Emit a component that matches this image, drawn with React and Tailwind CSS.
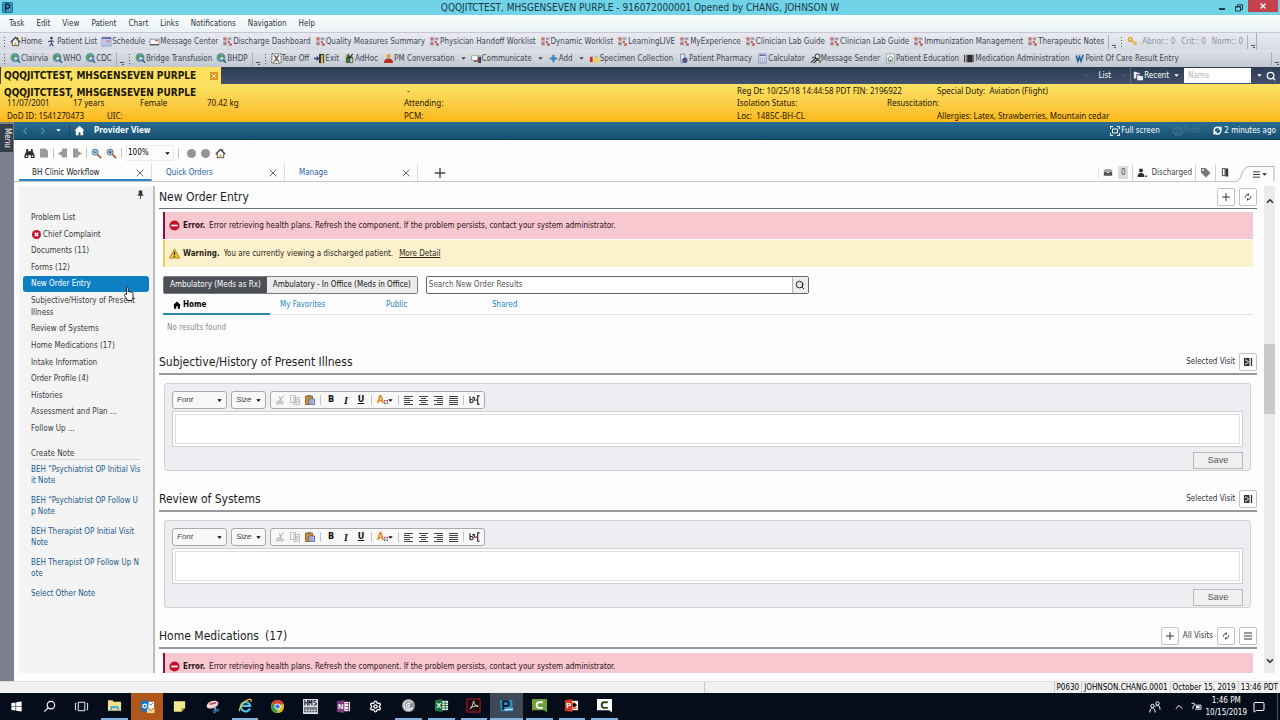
import React from "react";
import { Search, RefreshCw, Plus, X, ChevronUp, ChevronDown, ChevronLeft, ChevronRight, Settings, MessageSquare } from "lucide-react";

/* ---------- toolbar icons (12-unit grid) ---------- */
const Svg = ({ children, className = "h-[11px] w-[11px]", box = "0 0 12 12" }) => (
  <svg viewBox={box} className={`${className} shrink-0`} fill="none" aria-hidden="true">{children}</svg>
);
const HouseIcon = ({ className }) => (
  <Svg className={className}>
    <path d="M2.5 6v4.5h7V6" fill="#fdfdf0" stroke="#3b3b35" />
    <path d="M.8 6.8 6 1.6l5.2 5.2" stroke="#3b3b35" strokeWidth="1.3" />
    <path d="M8.3 1.2v2.4" stroke="#8a5a20" strokeWidth="1.4" />
    <path d="M5 7h2v3.5H5z" fill="#c9a24a" />
  </Svg>
);
const PersonIcon = () => (
  <Svg>
    <circle cx="6" cy="2.3" r="1.4" fill="#222d7a" />
    <path d="M6 4v4M3 6.2 6 4.8l2.6 1.4M6 8 4 11M6 8l2 3" stroke="#4050a0" strokeWidth="1.2" />
    <path d="M2.5 6h2" stroke="#222" />
  </Svg>
);
const ScheduleIcon = () => (
  <Svg>
    <path d="M1 1.5h10v9.5H1z" fill="#e9eefb" stroke="#7386b5" strokeWidth=".8" />
    <path d="M1 1.5h10v2H1z" fill="#53659c" />
    <path d="M2 5.5h8M2 7.5h8M2 9.5h8" stroke="#8b9acb" />
    <path d="M6 5.5h4" stroke="#d05050" />
  </Svg>
);
const MailIcon = () => (
  <Svg>
    <path d="M1 3.5h10v6H1z" fill="#fbfbfb" stroke="#777" strokeWidth=".8" />
    <path d="M1 9.6h10" stroke="#333" />
    <path d="M7 5h2.5" stroke="#c33" strokeWidth="1.3" />
  </Svg>
);
const TilesIcon = () => (
  <Svg>
    <path d="M1 1h10v10H1z" fill="#d3d4dc" />
    <path d="M1.5 1.5h3.500v3.500H1.500z" fill="#c9756c" />
    <path d="M6.500 2h3.500v2H6.500z" fill="#8d93b5" />
    <path d="M1.500 6.500h3.500v3.500H1.500z" fill="#a9808c" />
    <path d="M6.500 5.500h2v2h-2zM8 8h2.500v2.500H8z" fill="#c0504a" />
    <path d="M9 5.500h2v2H9z" fill="#f3f3f6" />
  </Svg>
);
const GlobeIcon = () => (
  <Svg>
    <circle cx="5.500" cy="5" r="4.400" fill="#5fa8cf" stroke="#3c6f91" strokeWidth=".6" />
    <path d="M2.500 2.500c2-1.500 3.500 0 3 1.500S3.500 5 3 7.500 1 4.500 2.500 2.500ZM6.500 2c2 0 3 1.500 3 3L7.500 4Z" fill="#58a344" />
    <circle cx="6.300" cy="5.800" r="2.300" fill="#dff1fb" fillOpacity=".75" stroke="#456" strokeWidth=".7" />
    <path d="m8 7.500 3 3.200" stroke="#3a5a86" strokeWidth="1.600" />
  </Svg>
);
const TearIcon = () => (
  <Svg>
    <path d="M1 1h10v10H1z" fill="#fff" stroke="#333" strokeDasharray="2 1" />
    <path d="M3 2.500 6 5l3-2.500M3 9.500 6 7l3 2.500" stroke="#333" strokeWidth="1.100" />
    <circle cx="6" cy="6" r="1.300" fill="#c33" />
  </Svg>
);
const ExitIcon = () => (
  <Svg>
    <path d="M5.500 1h5.500v10H5.500z" fill="#2a2a2a" />
    <path d="m7.500 2.500 2.500-1v10l-2.500-1z" fill="#d8b35c" />
    <path d="M0 6h4.500M3 4l2 2-2 2" stroke="#27408b" strokeWidth="1.400" />
  </Svg>
);
const AdHocIcon = () => (
  <Svg>
    <path d="M2 4h8v7H2z" fill="#3f6e46" />
    <path d="m3 1.500 2 4M5 1l1 4M9.500 1 6.500 5" stroke="#222" strokeWidth="1.100" />
    <path d="M1 2.500h2.500v2H1z" fill="#e5c52c" />
    <path d="M7 6h2v4H7z" fill="#cfd8e8" />
  </Svg>
);
const UserRedIcon = () => (
  <Svg>
    <circle cx="6" cy="3.400" r="2.400" fill="#e0a33a" />
    <path d="M1 11c0-3.500 2-5 5-5s5 1.500 5 5Z" fill="#b82c1f" />
  </Svg>
);
const CommIcon = () => (
  <Svg>
    <path d="M.5 3h7v5h-7z" fill="#fff" stroke="#777" strokeWidth=".7" />
    <path d="M3 9h4" stroke="#333" />
    <path d="M8 3.500h3V11H8z" fill="#2b3f7d" />
    <path d="M7 6h2v4H7z" fill="#cc3a2a" />
    <circle cx="9.500" cy="3" r="1.500" fill="#e3b66a" />
  </Svg>
);
const PlusBlueIcon = () => (
  <Svg><path d="M6 2v8M2 6h8" stroke="#2f7fc1" strokeWidth="2.200" /></Svg>
);
const SpecimenIcon = () => (
  <Svg>
    <path d="M1 2h3v8H1z" fill="#c8302b" />
    <path d="M1 2h3v2H1z" fill="#f3f3f3" />
    <circle cx="8" cy="8" r="3" fill="#f0d13c" />
    <path d="M6 4.500c1-2 3-1 3 .5" stroke="#999" />
  </Svg>
);
const PharmacyIcon = () => (
  <Svg>
    <path d="M2.500 1.500 7 1l1.500 9-5 .8z" fill="#e9eefb" stroke="#5668a8" strokeWidth=".8" />
    <circle cx="7.500" cy="7.800" r="2.800" fill="#2c4fa3" />
    <path d="m6 9 3-2.500" stroke="#d8452f" strokeWidth="1.600" />
  </Svg>
);
const CalcIcon = () => (
  <Svg>
    <path d="M2 1h8v10H2z" fill="#dfe5f2" stroke="#6f7fa9" strokeWidth=".8" />
    <path d="M3 2.500h6" stroke="#45578c" strokeWidth="1.200" />
    <path d="M3.500 5.500h5M3.500 7.500h5M3.500 9.500h5" stroke="#5568a0" strokeDasharray="1 1" />
  </Svg>
);
const SenderIcon = () => (
  <Svg>
    <path d="M1 10.500 8 4M4 11l5-5" stroke="#222" strokeWidth="1.200" />
    <circle cx="8.300" cy="3.700" r="2.700" fill="#ddd" stroke="#222" />
    <path d="M2 5h4M8 8h3v3" stroke="#333" />
  </Svg>
);
const EducationIcon = () => (
  <Svg>
    <path d="M1.500 1h9v10h-9z" fill="#f7f7f3" stroke="#8d8d8d" strokeWidth=".8" />
    <path d="M3.500 9V5.500L6 3.500l2.500 2V9z" stroke="#2f8a7a" />
    <path d="M5.300 7h1.400v2H5.300z" fill="#c33" />
  </Svg>
);
const BarcodeIcon = () => (
  <Svg>
    <path d="M0 2h1v8H0zM2 2h.8v8H2zM3.500 2h6v8h-6z" fill="#2b2b2b" />
    <path d="M10.200 2h.8v8h-.8z" fill="#444" />
  </Svg>
);
const CareIcon = () => (
  <Svg>
    <path d="M1 1.500h10v9H1z" fill="#b8c9dc" />
    <path d="m2.500 3 1.700 6L6 4l1.500 5 2.500-7" stroke="#1f5f93" strokeWidth="1.500" />
  </Svg>
);
const KeysIcon = () => (
  <Svg>
    <circle cx="3.500" cy="3.800" r="2" stroke="#d9a928" strokeWidth="1.600" />
    <path d="m5 5 4.500 4.500M7.500 7.500 9 6" stroke="#d9a928" strokeWidth="1.500" />
    <circle cx="9.300" cy="8.300" r="1.600" fill="#e5bc45" />
  </Svg>
);

const Caret = ({ className = "" }) => (
  <svg viewBox="0 0 6 4" className={`h-[3px] w-[5px] shrink-0 fill-current ${className}`} aria-hidden="true"><path d="M0 .3h6L3 3.700z" /></svg>
);
const Grip = () => (
  <span className="flex shrink-0 flex-col gap-[2px] px-px" aria-hidden="true">
    {[0, 1, 2, 3].map((i) => <i key={i} className="block h-px w-px bg-[#4f5866]" />)}
  </span>
);
const Overflow = ({ className = "" }) => (
  <button aria-label="More buttons" className={`flex h-[14px] w-2 shrink-0 flex-col items-end justify-end gap-px border-l border-[#aab0ba] pb-px ${className}`}>
    <i className="block h-px w-1 bg-[#555]" /><i className="block h-px w-[2px] bg-[#555]" />
  </button>
);
const Tool = ({ icon: Icon, label, menu }) => (
  <button className="flex shrink-0 items-center whitespace-nowrap">
    <Icon />{label}{menu && <Caret className="ml-[6px]" />}
  </button>
);

const ROW_ONE = [
  [HouseIcon, "Home"], [PersonIcon, "Patient List"], [ScheduleIcon, "Schedule"], [MailIcon, "Message Center"],
  [TilesIcon, "Discharge Dashboard"], [TilesIcon, "Quality Measures Summary"], [TilesIcon, "Physician Handoff Worklist"],
  [TilesIcon, "Dynamic Worklist"], [TilesIcon, "LearningLIVE"], [TilesIcon, "MyExperience"], [TilesIcon, "Clinician Lab Guide"],
  [TilesIcon, "Clinician Lab Guide"], [TilesIcon, "Immunization Management"], [TilesIcon, "Therapeutic Notes"],
];
const ROW_TWO = [
  [TearIcon, "Tear Off"], [ExitIcon, "Exit"], [AdHocIcon, "AdHoc"], [UserRedIcon, "PM Conversation", true],
  [CommIcon, "Communicate", true], [PlusBlueIcon, "Add", true], [SpecimenIcon, "Specimen Collection"],
  [PharmacyIcon, "Patient Pharmacy"], [CalcIcon, "Calculator"], [SenderIcon, "Message Sender"],
  [EducationIcon, "Patient Education"], [BarcodeIcon, "Medication Administration"], [CareIcon, "Point Of Care Result Entry"],
];
const tools = (list) => list.map(([icon, label, menu], i) => <Tool key={i} icon={icon} label={label} menu={menu} />);

function TitleBar() {
  return (
    <header className="flex h-[15px] items-center bg-[#70d3e8] text-[#173a45]">
      <span className="flex w-[120px] pl-[2px]">
        <svg viewBox="0 0 12 12" className="h-[11px] w-[11px]" aria-hidden="true">
          <rect x=".5" y=".5" width="11" height="11" rx="1.500" fill="#3d9ccb" stroke="#1c5d80" />
          <path d="M4 10V2.500h2.300a2 2 0 0 1 0 4.300H4" fill="none" stroke="#0b2536" strokeWidth="1.700" />
        </svg>
      </span>
      <h1 className="flex-1 text-center text-[10px] leading-[15px]">QQQJITCTEST, MHSGENSEVEN PURPLE - 916072000001 Opened by CHANG, JOHNSON W</h1>
      <span className="flex w-[120px] items-center justify-end self-stretch pr-[2px]">
        <button aria-label="Minimize" className="flex w-[17px] justify-center pt-[3px]"><i className="block h-[2px] w-[6px] bg-[#173a45]" /></button>
        <button aria-label="Restore" className="flex w-[18px] justify-center">
          <svg viewBox="0 0 8 8" className="h-2 w-2" fill="none" stroke="#173a45"><path d="M.5 2.500h5v4.500h-5zM.5 3h5M2.500 2V.8h5V5.500H6" /></svg>
        </button>
        <button aria-label="Close" className="flex h-3 w-[30px] items-center justify-center self-start bg-[#c3424c] text-white"><X className="h-2 w-2" strokeWidth={4} /></button>
      </span>
    </header>
  );
}

function MenuBar() {
  return (
    <nav className="flex h-[17px] items-center gap-3 bg-gradient-to-b from-[#fbfdfd] to-[#eaf3f6] pl-[9px] text-[#2d343c]">
      {["Task", "Edit", "View", "Patient", "Chart", "Links", "Notifications", "Navigation", "Help"].map((m) => <button key={m}>{m}</button>)}
    </nav>
  );
}

function Toolbars() {
  return (
    <div className="text-[#3d4654]">
      <div className="flex h-[18px] items-center overflow-hidden border-t border-[#c9c4d8] bg-gradient-to-b from-[#e9ebf1] to-[#d6dae2]">
        <div className="flex h-full items-center gap-1 border-r border-[#aab0ba] pl-[3px] pr-px">
          <Grip />{tools(ROW_ONE)}<Overflow />
          <Grip /><KeysIcon />
          <span className="flex gap-[6px] text-[#8d929b]"><span>Abnor:: 0</span><span>Crit:: 0</span><span>Norm:: 0</span></span>
          <Overflow />
        </div>
      </div>
      <div className="flex h-[17px] items-center gap-1 overflow-hidden bg-gradient-to-b from-[#dfe2e8] to-[#c3c8d0] pl-[3px]">
        <Grip />{tools([[GlobeIcon, "Clairvia"], [GlobeIcon, "WHO"], [GlobeIcon, "CDC"]])}<Overflow />
        <Grip />{tools([[GlobeIcon, "Bridge Transfusion"], [GlobeIcon, "BHDP"]])}<Overflow />
        <Grip /><div className="flex gap-[5px]">{tools(ROW_TWO)}</div><Overflow className="ml-auto mr-px" />
      </div>
    </div>
  );
}

function PatientTabs() {
  return (
    <div className="flex h-[17px] items-stretch bg-gradient-to-b from-[#2e3c54] to-[#42516c] pl-px text-white">
      <div className="flex w-[220px] items-center bg-[#fde061] pl-[3px] text-[#201a05]">
        <span className="flex-1 text-[10px] font-bold leading-[16px]">QQQJITCTEST, MHSGENSEVEN PURPLE</span>
        <button aria-label="Close patient tab" className="mr-[3px] flex h-2 w-2 items-center justify-center bg-[#dd9a22] text-white"><X className="h-[6px] w-[6px]" strokeWidth={4} /></button>
      </div>
      <div className="ml-auto flex items-center">
        <span className="mr-2 text-[#50607c]">←</span>
        <button>List</button>
        <span className="ml-2 text-[#50607c]">→</span>
        <button className="ml-[5px] flex h-full items-center border-l border-[#5a6884] pl-[2px]">
          <svg viewBox="0 0 12 12" className="mr-px h-[10px] w-[10px]" fill="#e8ecf3" aria-hidden="true"><path d="M1 1h3l1 1h3v2H4v5H1zM5 5h2.500l1 1H12v5H5z" /></svg>
          Recent<Caret className="mx-[5px]" />
        </button>
        <input aria-label="Name" placeholder="Name" className="h-[15px] w-[67px] bg-white pl-1 text-black placeholder:text-[#b4b8bf]" />
        <button aria-label="Search options" className="ml-[6px]"><Caret /></button>
        <button aria-label="Search" className="mx-1"><Search className="h-[10px] w-[10px]" strokeWidth={3} /></button>
      </div>
    </div>
  );
}

function Banner() {
  return (
    <section className="grid h-[38px] shrink-0 grid-cols-[66px_67px_67px_197px_333px_150px_50px_1fr] grid-rows-3 bg-gradient-to-b from-[#fbe364] to-[#fcb813] pt-px pl-[7px] font-['Noto_Sans',sans-serif] text-[8px] leading-[12px] text-[#1d1604]">
      <b className="col-span-4 -ml-[3px] font-['DejaVu_Sans_Condensed',sans-serif] text-[10px] leading-[15px]">QQQJITCTEST, MHSGENSEVEN PURPLE</b>
      <span className="pl-[3px]">-</span>
      <span className="col-span-2 whitespace-nowrap">Reg Dt: 10/25/18 14:44:58 PDT FIN: 2196922</span>
      <span>Special Duty: &nbsp;Aviation (Flight)</span>
      <span>11/07/2001</span><span>17 years</span><span>Female</span><span>70.42 kg</span><span>Attending:</span>
      <span>Isolation Status:</span><span className="col-span-2">Resuscitation:</span>
      <span className="whitespace-nowrap">DoD ID: 1541270473</span><span className="pl-[34px]">UIC:</span><span className="col-span-2" /><span>PCM:</span>
      <span className="col-span-2">Loc: &nbsp;1485C-BH-CL</span><span>Allergies: Latex, Strawberries, Mountain cedar</span>
    </section>
  );
}

function ViewBar() {
  return (
    <div className="flex h-[18px] shrink-0 items-center border-b border-[#123c52] bg-gradient-to-b from-[#2a6c92] to-[#175070] text-white">
      <button aria-label="Back" className="ml-[6px] text-[#5791ad]"><ChevronLeft className="h-[10px] w-[10px]" strokeWidth={3} /></button>
      <button aria-label="Forward" className="ml-2 text-[#5791ad]"><ChevronRight className="h-[10px] w-[10px]" strokeWidth={3} /></button>
      <button aria-label="History" className="ml-2 mr-2"><Caret /></button>
      <button aria-label="Home" className="border-l border-[#134a66] pl-1">
        <svg viewBox="0 0 12 12" className="h-[11px] w-[11px]" fill="#fff"><path d="M6 .8 11.500 6H10v5.200H7V8H5v3.200H2V6H.5z" /></svg>
      </button>
      <b className="ml-[9px] text-[8px] text-[#f2fafd]">Provider View</b>
      <button className="ml-auto flex items-center">
        <svg viewBox="0 0 10 10" className="mr-px h-[10px] w-[10px]" fill="none" stroke="#fff" aria-hidden="true"><path d="M.5 3V.5H3M7 .5h2.500V3M9.500 7v2.500H7M3 9.500H.5V7M2.500 3h5v4h-5z" /></svg>
        Full screen
      </button>
      <button className="ml-[13px] flex items-center text-[#3f7796]" disabled>
        <svg viewBox="0 0 10 10" className="mr-px h-[10px] w-[10px]" fill="none" stroke="currentColor" aria-hidden="true"><path d="M2 3V1h6v2M.5 3h9v4h-9zM2 7v2h6V7" /></svg>
        Print
      </button>
      <button className="ml-[13px] mr-1 flex items-center gap-[2px]"><RefreshCw className="h-[9px] w-[9px]" strokeWidth={4} />2 minutes ago</button>
    </div>
  );
}

const Bar = () => <i className="block h-[10px] w-px bg-[#c4c4c4]" />;
const PageShape = () => <svg viewBox="0 0 10 10" className="h-[10px] w-[10px]" fill="#9b9b9b" aria-hidden="true"><path d="M1 .5h5.500L9 3v6.500H1z" /></svg>;
const ArrowPage = ({ next }) => (
  <svg viewBox="0 0 10 10" className="h-[10px] w-[10px]" fill="#9b9b9b" aria-hidden="true">
    <path d={next ? "M1 .5h5V3l4 2.500L6 8v1.500H1z" : "M9 .5H4V3L0 5.500 4 8v1.500h5z"} />
  </svg>
);
const ZoomGlyph = ({ plus }) => (
  <svg viewBox="0 0 12 12" className="h-[11px] w-[11px]" fill="none" aria-hidden="true">
    <circle cx="4.500" cy="4.500" r="3.300" fill="#a9cfe8" stroke="#55728a" />
    <path d={plus ? "M3 4.500h3M4.500 3v3" : "M3 4.500h3"} stroke="#333" />
    <path d="m7 7 4 4" stroke="#a3552b" strokeWidth="1.800" />
  </svg>
);

function ViewTools() {
  return (
    <div className="flex h-6 shrink-0 items-center gap-1 pl-[10px] pt-[2px] text-black">
      <button aria-label="Find">
        <svg viewBox="0 0 12 12" className="h-[11px] w-[11px]" fill="#2e2e2e"><path d="M2.500 1h2v2.500h3V1h2v2.500l2 4.500v3H7.500V8h-3v3H.5V8l2-4.500z" /><path d="M2 8.300h1.500v1.500H2zM8.500 8.300H10v1.500H8.500z" fill="#fff" /></svg>
      </button>
      <button aria-label="Copy"><PageShape /></button><Bar />
      <button aria-label="Previous page"><ArrowPage /></button>
      <button aria-label="Next page"><ArrowPage next /></button><Bar />
      <button aria-label="Zoom out"><ZoomGlyph /></button>
      <button aria-label="Zoom in"><ZoomGlyph plus /></button><Bar />
      <span className="relative flex items-center border border-[#ececec]">
        <select aria-label="Zoom" defaultValue="100%" className="h-[14px] w-[46px] appearance-none bg-transparent pl-px"><option>100%</option></select>
        <Caret className="pointer-events-none absolute right-[3px]" />
      </span>
      <Bar />
      <button aria-label="Back" className="ml-1 block h-[9px] w-[9px] rounded-full bg-[#959595]" />
      <button aria-label="Forward" className="ml-px block h-[9px] w-[9px] rounded-full bg-[#959595]" />
      <button aria-label="Home" className="ml-px"><HouseIcon className="h-[11px] w-[11px]" /></button>
    </div>
  );
}

function WorkflowTabs() {
  return (
    <div className="flex h-[18px] shrink-0 items-stretch">
      <div className="flex flex-1 border-b border-[#c6c6c6] pl-[5px]">
        {["BH Clinic Workflow", "Quick Orders", "Manage"].map((t, i) => (
          <div key={t} className={i === 0
            ? "flex w-[133px] items-center border-b-2 border-r border-b-[#2a86c8] border-r-[#dcdcdc] pl-[13px] pr-[5px] pt-[2px] text-[#222]"
            : "flex w-[133px] items-center border-r border-[#dcdcdc] pl-[14px] pr-[5px] pt-px text-[#1f5fa5]"}>
            <button className="flex-1 text-left">{t}</button>
            <button aria-label={`Close ${t}`}><X className="h-3 w-3 text-[#666]" strokeWidth={2} /></button>
          </div>
        ))}
        <button aria-label="Add tab" className="ml-[14px] text-[#444]"><Plus className="h-4 w-4" strokeWidth={2} /></button>
        <div className="ml-auto flex items-center text-[#444]">
          <span className="flex items-center gap-[5px] border-l border-[#e6e6e6] px-1">
            <svg viewBox="0 0 12 10" className="h-[9px] w-[10px]" aria-hidden="true"><path d="M1 4V2.500L2.500 1h7L11 2.500V4z" fill="#999" /><path d="M1 4.500h3.500l.8 1.200h1.400l.8-1.200H11V9H1z" fill="#555" /></svg>
            <span className="w-[10px] bg-[#dcdcdc] text-center leading-[13px]">0</span>
          </span>
          <span className="flex items-center gap-1 border-l border-[#d0d0d0] py-[3px] pl-1 pr-[3px]">
            <svg viewBox="0 0 10 10" className="h-[10px] w-[10px]" fill="#333" aria-hidden="true"><circle cx="4" cy="2.500" r="2" /><path d="M.5 9c0-2.800 1-4 3.500-4s3.500 1.200 3.500 4zM8.500 7.500H10V9H8.500z" /></svg>
            Discharged
          </span>
          <button aria-label="Tags" className="border-l border-[#d0d0d0] px-1 py-[3px]">
            <svg viewBox="0 0 12 12" className="h-[11px] w-[11px]"><path d="M1 1h5l5.500 5.500-5 5L1 6z" fill="#777" /><circle cx="3.300" cy="3.300" r="1" fill="#fff" /></svg>
          </button>
          <button aria-label="Toggle panel" className="border-l border-[#d0d0d0] px-[5px] py-[3px]">
            <svg viewBox="0 0 10 12" className="h-[11px] w-[9px]"><path d="M1.500 1.500h3v8h-3z" fill="none" stroke="#333" /><path d="M5 1.500h3v9H5z" fill="#333" /></svg>
          </button>
        </div>
      </div>
      <button aria-label="View menu" className="relative mr-[5px] flex w-[40px] items-center justify-center text-[#222]">
        <svg viewBox="0 0 40 18" className="absolute inset-0 h-full w-full" fill="none" stroke="#b3b3b3" aria-hidden="true"><path d="M0 17.500c4 0 5-3 7-8s4-7 8-7h24v15" /></svg>
        <span className="relative ml-[10px] mt-[3px] flex items-center gap-[2px]">
          <svg viewBox="0 0 8 8" className="h-[7px] w-[7px]" stroke="currentColor"><path d="M0 1h8M0 4h8M0 7h8" /></svg><Caret />
        </span>
      </button>
    </div>
  );
}

const NAV = ["Problem List", "Chief Complaint", "Documents (11)", "Forms (12)", "New Order Entry", "Subjective/History of Present Illness",
  "Review of Systems", "Home Medications (17)", "Intake Information", "Order Profile (4)", "Histories", "Assessment and Plan ...", "Follow Up ..."];
const NOTES = [["BEH \u201cPsychiatrist OP Initial Vis", "it Note"], ["BEH \u201cPsychiatrist OP Follow U", "p Note"],
  ["BEH Therapist OP Initial Visit", "Note"], ["BEH Therapist OP Follow Up N", "ote"], ["Select Other Note"]];

function Sidebar() {
  return (
    <aside className="relative w-[136px] shrink-0 border-r-2 border-[#bdbdbd] bg-[#f4f4f4] px-1 text-[#3a3a3a]">
      <div className="flex h-6 items-start justify-end pr-[5px] pt-1">
        <button aria-label="Pin menu">
          <svg viewBox="0 0 8 10" className="h-[9px] w-[7px]" fill="#333"><path d="M2 .5h4V5h1.300v1.300H4.500V10h-1V6.300H.7V5H2z" /></svg>
        </button>
      </div>
      <nav className="flex h-[227px] flex-col justify-between">
        {NAV.map((n) => (
          <a key={n} href="#" className={n === "New Order Entry"
            ? "flex items-center rounded-[3px] bg-[#0f7fc4] px-2 py-[2px] leading-[12px] text-white"
            : "flex items-center px-2 py-[2px] leading-[12px]"}>
            {n === "Chief Complaint" && (
              <svg viewBox="0 0 10 10" className="ml-px mr-[2px] h-[9px] w-[9px]" aria-hidden="true"><circle cx="5" cy="5" r="5" fill="#c4122f" /><path d="m3 3 4 4m0-4L3 7" stroke="#fff" strokeWidth="1.600" /></svg>
            )}
            <span>{n}</span>
          </a>
        ))}
      </nav>
      <div className="ml-2 mr-[9px] mt-[11px]">
        <h2 className="border-b border-[#d2d2d2] leading-[11px]">Create Note</h2>
        <ul className="mt-1 flex flex-col gap-[9px] text-[#1b5a8c]">
          {NOTES.map(([a, b]) => <li key={a}><a href="#" className="block whitespace-nowrap leading-[11px]">{a}{b && <><br />{b}</>}</a></li>)}
        </ul>
      </div>
      <svg viewBox="0 0 12 15" className="absolute left-[104px] top-[100px] h-[15px] w-3" aria-hidden="true">
        <path d="M3.500 8.500V1.800c0-1.200 1.700-1.200 1.700 0V6c.3-.8 1.600-.7 1.700.2.400-.6 1.500-.4 1.600.4.500-.4 1.500-.1 1.500.9v3c0 2-.8 2.500-1 4H4.500c-.3-1.600-1.700-2.500-3-4.800-.6-1.200.8-2 2-1.200Z" fill="#fff" stroke="#111" strokeWidth=".9" />
      </svg>
    </aside>
  );
}

const IconButton = ({ label, children }) => (
  <button aria-label={label} className="flex h-[18px] w-[18px] items-center justify-center rounded-[2px] border border-[#c2c2c2] bg-white text-[#333]">{children}</button>
);
const ReloadGlyph = () => (
  <svg viewBox="0 0 10 10" className="h-2 w-2" fill="none" stroke="currentColor" strokeWidth="1.200"><path d="M1.500 6c0-2.500 1.500-4 3.500-4h.8M8.500 4c0 2.500-1.500 4-3.500 4h-.8M4.800.6 6.300 2 4.800 3.400M5.200 6.600 3.700 8l1.500 1.400" /></svg>
);

const Heading = ({ title, count, children }) => (
  <div className="flex h-[25px] items-center border-b-2 border-[#96999d]">
    <h2 className="flex-1 text-[12px] leading-[18px] text-[#1c1c1c]">{title}{count && <span className="ml-[6px]">{count}</span>}</h2>
    <div className="flex items-center gap-1 text-[#333]">{children}</div>
  </div>
);

const ErrorBar = () => (
  <p className="mx-1 flex h-[27px] items-center border-l-2 border-[#8e0b3e] bg-[#f8c8d1] pl-1 text-[#2a1216]">
    <svg viewBox="0 0 12 12" className="mr-[3px] h-[11px] w-[11px]" aria-hidden="true"><circle cx="6" cy="6" r="5.500" fill="#c0102c" /><path d="M2.500 6h7" stroke="#fff" strokeWidth="1.800" /></svg>
    <b className="mr-1">Error.</b>Error retrieving health plans. Refresh the component. If the problem persists, contact your system administrator.
  </p>
);

const AlignGlyph = ({ d }) => <svg viewBox="0 0 9 9" className="h-[9px] w-[9px]" stroke="#444"><path d={d} /></svg>;
const Group = ({ children, className = "" }) => (
  <div className={`flex h-[18px] items-center rounded-[3px] border border-[#a9a9a9] bg-[#f8f8f9] ${className}`}>{children}</div>
);
const Picker = ({ label, width }) => (
  <Group className="relative">
    <select aria-label={label} className={`h-full appearance-none bg-transparent pl-1 font-['Liberation_Sans',sans-serif] italic text-[#444] ${width}`}><option>{label}</option></select>
    <Caret className="pointer-events-none absolute right-1" />
  </Group>
);

function Editor({ title }) {
  return (
    <section className="mt-4">
      <Heading title={title}>
        <span>Selected Visit</span>
        <IconButton label={`Open ${title}`}>
          <svg viewBox="0 0 10 10" className="h-[10px] w-[10px]" fill="none"><path d="M1 1h5.500v8H1z" fill="#333" /><path d="M2 3h1.500M2 7h1.500M3.500 3l2 2-2 2" stroke="#fff" /><path d="M8.500 1v8" stroke="#333" strokeWidth="1.300" /></svg>
        </IconButton>
      </Heading>
      <div className="ml-[5px] mr-[6px] mt-2 rounded-[3px] border border-[#d3d3d6] bg-[#eeeef2] px-[7px] pb-px pt-[7px]">
        <div className="flex gap-1">
          <Picker label="Font" width="w-[53px]" />
          <Picker label="Size" width="w-[33px]" />
          <Group className="gap-[5px] px-1 text-[#111]">
            <button aria-label="Cut"><svg viewBox="0 0 10 10" className="h-[10px] w-[10px]" fill="none" stroke="#a4a8b4"><path d="M8.500.5 4 6.500M4.500 1.500 6 6" /><circle cx="3" cy="7.700" r="1.500" /><circle cx="6.800" cy="7.700" r="1.300" /></svg></button>
            <button aria-label="Copy"><svg viewBox="0 0 10 10" className="h-[10px] w-[10px]" fill="#f4f4f4" stroke="#b3b3b8" strokeWidth=".8"><path d="M.5.500h5v7h-5zM4 2.500h5.500v7H4zM5 4.500h3.500M5 6h3.500M5 7.500h3.500" /></svg></button>
            <button aria-label="Paste"><svg viewBox="0 0 10 10" className="h-[10px] w-[10px]"><path d="M.5 1h7v8.500h-7z" fill="#d98b28" stroke="#7a4a12" strokeWidth=".7" /><path d="M2.500 0h3v2h-3z" fill="#777" /><path d="M4 4h5.500v5.800H4z" fill="#dfe8fb" stroke="#2c4c9c" strokeWidth=".8" /><path d="M5 6h3.500M5 8h3.500" stroke="#2c4c9c" strokeWidth=".8" /></svg></button>
            <Bar />
            <button className="w-[10px] text-[9px] font-bold">B</button>
            <button className="w-[10px] font-['Liberation_Serif',serif] text-[10px] font-bold italic">I</button>
            <button className="w-[10px] text-[9px] font-bold underline">U</button>
            <Bar />
            <button aria-label="Text color" className="flex items-center">
              <b className="text-[10px] leading-[12px] text-[#e08a1c]">A</b>
              <svg viewBox="0 0 4 4" className="mt-1 h-1 w-1"><path d="M0 0h1.500v1.500H0z" fill="#d33" /><path d="M2.500 0H4v1.500H2.500z" fill="#c9302c" /><path d="M0 2.500h1.500V4H0z" fill="#36a" /><path d="M2.500 2.500H4V4H2.500z" fill="#2a2" /></svg>
              <Caret />
            </button>
            <Bar />
            <button aria-label="Align left"><AlignGlyph d="M0 .5h9M0 2.500h6M0 4.500h9M0 6.500h6M0 8.500h9" /></button>
            <button aria-label="Align center" className="ml-px"><AlignGlyph d="M0 .5h9M2 2.500h5M0 4.500h9M2 6.500h5M0 8.500h9" /></button>
            <button aria-label="Align right" className="ml-px"><AlignGlyph d="M0 .5h9M3 2.500h6M0 4.500h9M3 6.500h6M0 8.500h9" /></button>
            <button aria-label="Justify" className="ml-px"><AlignGlyph d="M0 .5h9M0 2.500h9M0 4.500h9M0 6.500h9M0 8.500h9" /></button>
            <Bar />
            <button aria-label="Insert text"><svg viewBox="0 0 12 10" className="h-[10px] w-[11px]" fill="none" stroke="#222"><path d="M1 .8v5.700c0 2 3 1.800 3.500.3S3 3.500 1.500 5M4.500 1.500l2.500 4.500M3.500 2.500h3" strokeWidth="1.200" /><path d="M11.500.5h-2v9h2" strokeWidth="1.200" /><path d="m9 3.500-2 1.500 2 1.500z" fill="#c33" stroke="none" /></svg></button>
          </Group>
        </div>
        <div className="mt-[2px] flex border border-[#cfcfd2] bg-white p-[2px]">
          <textarea aria-label={title} className="h-[30px] w-full resize-none border border-[#dedee0] bg-white" />
        </div>
        <div className="mt-[5px] flex justify-end">
          <button className="h-[17px] w-[50px] border border-[#b9b9bb] bg-[#f0f0f1] font-['Liberation_Sans',sans-serif] text-[9px] text-[#555]">Save</button>
        </div>
      </div>
    </section>
  );
}

function NewOrderEntry() {
  return (
    <section>
      <div className="flex h-[23px] items-center border-b border-[#6b6f74]">
        <h2 className="flex-1 text-[12px] leading-[18px] text-[#1c1c1c]">New Order Entry</h2>
        <div className="flex gap-1">
          <IconButton label="Add order"><Plus className="h-3 w-3" strokeWidth={2} /></IconButton>
          <IconButton label="Refresh orders"><ReloadGlyph /></IconButton>
        </div>
      </div>
      <div className="mt-[3px]"><ErrorBar /></div>
      <p className="mx-1 mt-px flex h-[27px] items-center border-l-2 border-[#ebcf5e] bg-[#fcf1cd] pl-1 text-[#2a2616]">
        <svg viewBox="0 0 12 12" className="mr-[3px] h-[11px] w-[11px]" aria-hidden="true"><path d="M6 1 11.500 11H.5z" fill="#f3c81e" stroke="#8a7010" strokeWidth=".8" /><path d="M6 4v3.500M6 8.500v1.300" stroke="#222" strokeWidth="1.300" /></svg>
        <b className="mr-1">Warning.</b>You are currently viewing a discharged patient.
        <a href="#" className="ml-[6px] underline">More Detail</a>
      </p>
      <div className="mx-1 mt-[9px] flex h-[18px] gap-2">
        <div className="flex rounded-[2px] border border-[#77797c]">
          <button className="bg-[#4d5056] px-[6px] text-white">Ambulatory (Meds as Rx)</button>
          <button className="bg-[#ececec] px-[6px] text-[#111]">Ambulatory - In Office (Meds in Office)</button>
        </div>
        <div className="flex w-[383px] rounded-[2px] border border-[#66686b] bg-white">
          <input aria-label="Search New Order Results" placeholder="Search New Order Results" className="min-w-0 flex-1 pl-[2px] text-black placeholder:text-[#555]" />
          <button aria-label="Search" className="flex w-4 items-center justify-center border-l border-[#b5b5b5] bg-[#ececec]"><Search className="h-[10px] w-[10px]" strokeWidth={2} /></button>
        </div>
      </div>
      <div className="mx-1 flex h-[21px] border-b border-[#e2e2e2] text-[#2385c0]">
        <button className="-mb-px flex w-[107px] items-center border-b-2 border-[#2b86a8] pl-[10px] pt-[2px] font-bold text-black">
          <svg viewBox="0 0 12 12" className="mr-[2px] h-2 w-2" fill="currentColor" aria-hidden="true"><path d="M6 .8 12 6.500h-1.500v5H7.200V8H4.800v3.500H1.500v-5H0z" /></svg>Home
        </button>
        {["My Favorites", "Public", "Shared"].map((t) => <button key={t} className="w-[106px] pl-[10px] pt-px text-left">{t}</button>)}
      </div>
      <p className="ml-2 mt-[7px] leading-[11px] text-[#8a8a8a]">No results found</p>
    </section>
  );
}

function Workspace() {
  return (
    <main className="min-w-0 flex-1 overflow-hidden pl-1">
      <NewOrderEntry />
      <div className="pt-px"><Editor title="Subjective/History of Present Illness" /></div>
      <Editor title="Review of Systems" />
      <section className="mt-4">
        <Heading title="Home Medications" count="(17)">
          <IconButton label="Add medication"><Plus className="h-3 w-3" strokeWidth={2} /></IconButton>
          <span>All Visits</span>
          <IconButton label="Refresh medications"><ReloadGlyph /></IconButton>
          <IconButton label="Medication menu"><svg viewBox="0 0 8 8" className="h-2 w-2" stroke="currentColor"><path d="M0 1h8M0 4h8M0 7h8" /></svg></IconButton>
        </Heading>
        <div className="mt-1"><ErrorBar /></div>
      </section>
    </main>
  );
}

function ScrollBar() {
  return (
    <div className="ml-[7px] mr-[5px] flex w-[11px] shrink-0 flex-col items-center bg-[#ebebeb] text-[#333]" aria-hidden="true">
      <ChevronUp className="mt-[10px] h-[10px] w-[10px]" strokeWidth={4} />
      <span className="mt-[138px] block h-[70px] w-full bg-[#c9c9c9]" />
      <ChevronDown className="mb-[7px] mt-auto h-[10px] w-[10px]" strokeWidth={4} />
    </div>
  );
}

/* ---------- taskbar ---------- */
const Office = ({ fill, letter, side }) => (
  <svg viewBox="0 0 16 16" className="h-[15px] w-[15px]" aria-hidden="true">
    <path d="M8 3h7v10H8z" fill="#fff" />{side}
    <path d="M1 2.500 9 1v14l-8-1.500z" fill={fill} />
    <text x="5" y="11" textAnchor="middle" fontSize="8" fontWeight="bold" fill="#fff" fontFamily="Liberation Sans">{letter}</text>
  </svg>
);
const TaskIcon = ({ children }) => <svg viewBox="0 0 16 16" className="h-[15px] w-[15px]" fill="none" aria-hidden="true">{children}</svg>;
const APPS = [
  ["Start", <TaskIcon><path d="M2.500 4.300 7 3.600v4H2.500zM7.600 3.500 13.500 2.600v5H7.600zM2.500 8.300H7v4l-4.500-.7zM7.600 8.300h5.900v5l-5.900-.9z" fill="#fff" /></TaskIcon>],
  ["Search", <TaskIcon><circle cx="9.500" cy="6.500" r="4" stroke="#fff" strokeWidth="1.200" /><path d="m6.500 9.500-4 4" stroke="#fff" strokeWidth="1.300" /></TaskIcon>],
  ["Task view", <TaskIcon><path d="M4.500 3.500h7v9h-7zM2.500 4.500h-1v7h1M13.500 4.500h1v7h-1" stroke="#fff" /></TaskIcon>],
  ["File Explorer", <TaskIcon><path d="M1 2.500h5l1 1.500h8V13.500H1z" fill="#f5e08c" /><path d="M3.500 8.500h9v5h-2V11h-5v2.500h-2z" fill="#4fb0e3" /></TaskIcon>, "run"],
  ["Outlook", <TaskIcon><path d="M8 3h7v7H8z" fill="#fff" /><path d="M1 2.500 9 1v13l-8-1.500z" fill="#1673c4" /><circle cx="5" cy="7.500" r="2" stroke="#fff" strokeWidth="1.300" /><path d="M7.500 9.500h8V15h-8z" fill="#f0d9a4" /><path d="m7.500 9.500 4 3 4-3" stroke="#a9762a" /><path d="m10 5 1.500 1.500L14 4" stroke="#1673c4" /></TaskIcon>, "alert"],
  ["Sticky Notes", <TaskIcon><path d="M2 2.500h12v7l-4 4H2z" fill="#f1ea8e" /><path d="M14 9.500h-4v4z" fill="#a69c44" /></TaskIcon>],
  ["Snipping Tool", <TaskIcon><ellipse cx="8" cy="6" rx="6.500" ry="3.800" transform="rotate(-20 8 6)" fill="#f0d5d8" /><path d="M5 5.500 12 4" stroke="#c33a4a" strokeWidth="1.600" /><path d="m8 8 5 4M11 7.500 10.500 13" stroke="#9fb9d3" /><circle cx="13.300" cy="12" r="1.300" stroke="#3f8dd0" /><circle cx="10" cy="13.500" r="1.300" stroke="#3f8dd0" /></TaskIcon>],
  ["Internet Explorer", <TaskIcon><path d="M12.700 11.200A5 5 0 1 1 13 8.500H4.500" stroke="#4fc1f0" strokeWidth="2.400" /><path d="M2 14c-2-2 4-11 10-12.500 2-.4 2.500.8 1.800 2.500" stroke="#f3c832" strokeWidth="1.300" /></TaskIcon>, "run"],
  ["Chrome", <TaskIcon><circle cx="8" cy="8" r="7" fill="#e2b92c" /><path d="M8 8 1.900 4.500a7 7 0 0 1 12.200 0z" fill="#d8402f" /><path d="M8 8 1.900 4.500A7 7 0 0 0 7.500 15z" fill="#3a9a4c" /><circle cx="8" cy="8" r="3.300" fill="#fff" /><circle cx="8" cy="8" r="2.500" fill="#3f7fe0" /></TaskIcon>],
  ["MHS", <TaskIcon><path d="M0 0h16v16H0z" fill="#dadde2" /><path d="M2 1v6M2 4h2.500M5 1v6M6.500 7V1L8 4l1.500-3v6M14 1.700c-3-1-3 2.300-1 2.300s2 3-1.500 2.300M1 9.500h14" stroke="#1a2030" strokeWidth="1.100" /><path d="M1 11.500h14M1 13.500h14" stroke="#1a2030" strokeDasharray="2 1" /></TaskIcon>],
  ["OneNote", <Office fill="#80397b" letter="N" side={<path d="M10 5h4M10 8h4M10 11h4M13.500 3v10" stroke="#80397b" />} />],
  ["Settings", <Settings className="h-[13px] w-[13px] text-white" strokeWidth={2.500} />],
  ["Citrix", <TaskIcon><circle cx="8" cy="8" r="7" fill="#8b9096" /><path d="M12 5A5 5 0 1 0 12.500 10M10 6.500a2.500 2.500 0 1 0 0 3.500" stroke="#fff" strokeWidth="1.300" /><circle cx="8.300" cy="8.200" r="1" fill="#fff" /></TaskIcon>, "run"],
  ["Excel", <Office fill="#1e7244" letter="X" side={<path d="M9 5.500h6M9 8h6M9 10.500h6M12 3v10" stroke="#1e7244" />} />, "run"],
  ["Acrobat", <TaskIcon><path d="M1 1h14v14H1z" fill="#1d0a0b" stroke="#c31f24" /><path d="M4 12c1.500-1 4-5.500 3.700-8 0-1 .9-1 .7 0-.3 2 2.400 5 4.100 5 .8 0 .6-.8 0-.8-2 0-6 1-7.500 2.500" stroke="#f2f2f2" strokeWidth=".9" /></TaskIcon>, "run"],
  ["PowerChart", <TaskIcon><path d="M1 2h13l1 12H2z" fill="#2f8dc0" /><path d="M4.500 12.500v-9H8c3.500 0 3.500 5 0 5H5" stroke="#0b1c2b" strokeWidth="2" /><path d="M6 13c3-2 5 .5 9-1.500" stroke="#c8e8f7" strokeWidth="1.500" /></TaskIcon>, "active"],
  ["Camtasia", <TaskIcon><path d="M0 1h16v14.500l-3-2.500H0z" fill="#6ea03a" /><path d="M11.500 4.500H7.500c-2 0-2.500 1-2.500 3s.5 3 2.500 3h4" stroke="#fff" strokeWidth="2" /></TaskIcon>, "run"],
  ["PowerPoint", <Office fill="#cf3d22" letter="P" side={<path d="M9 11h5M9 6.500a2.200 2.200 0 1 1 0 2" stroke="#cf3d22" />} />, "run"],
  ["Camtasia Recorder", <TaskIcon><path d="M0 1h16v14.500l-3-2.500H0z" fill="#fff" /><path d="M11.500 4.500H7.500c-2 0-2.500 1-2.500 3s.5 3 2.500 3h4" stroke="#2f4216" strokeWidth="2" /></TaskIcon>, "run"],
];
const SLOT = {
  run: "flex items-center justify-center border-b-2 border-[#7fb2e0] mx-[3px]",
  alert: "flex items-center justify-center bg-[#b0571c]",
  active: "flex items-center justify-center border-b-2 border-[#7fb2e0] bg-[#3d4858]",
};

function TaskBar() {
  return (
    <footer className="flex h-[27px] shrink-0 items-stretch bg-[#050d1a] text-white">
      <div className="grid w-[621px] grid-cols-[repeat(19,minmax(0,1fr))]">
        {APPS.map(([name, icon, state]) => (
          <button key={name} aria-label={name} className={SLOT[state] || "flex items-center justify-center"}>{icon}</button>
        ))}
      </div>
      <div className="ml-auto flex items-center">
        <svg viewBox="0 0 12 12" className="mr-3 h-3 w-3" fill="none" stroke="#fff" aria-hidden="true"><circle cx="3.500" cy="5" r="1.700" /><path d="M.8 11.500c0-6 5.400-6 5.400 0" /><circle cx="8.500" cy="2.500" r="1.700" /><path d="M6.500 5.500c1.500-2 4.500-1.500 4.500 3" /></svg>
        <ChevronUp className="mr-[6px] h-3 w-3" strokeWidth={2} />
        <svg viewBox="0 0 12 10" className="mr-1 h-[9px] w-[11px]" fill="none" stroke="#fff" aria-hidden="true"><path d="M4 3.500h7v4.500H4.500M.5 1.500h3v2.500L2 5v3" /><path d="M5.500 4.500h4v2.500h-4z" fill="#fff" stroke="none" /></svg>
        <p className="text-center leading-[12px]">1:46 PM<br />10/15/2019</p>
        <MessageSquare className="ml-[6px] mr-[12px] h-3 w-3" strokeWidth={2} />
        <i className="mr-[2px] block h-full w-px bg-[#4a5260]" />
      </div>
    </footer>
  );
}

export default function App() {
  return (
    <div className="flex h-screen min-h-[720px] flex-col overflow-hidden bg-[#fdfdfe] font-['DejaVu_Sans_Condensed','DejaVu_Sans',sans-serif] text-[8px]">
      <TitleBar />
      <MenuBar />
      <Toolbars />
      <PatientTabs />
      <Banner />
      <div className="flex min-h-0 flex-1">
        <div className="w-[14px] shrink-0 bg-[#7b818f] pt-[2px]">
          <button className="flex h-7 w-[13px] items-center justify-center bg-[#363d4b] text-white [writing-mode:vertical-rl]">Menu</button>
        </div>
        <div className="flex min-w-0 flex-1 flex-col">
          <ViewBar />
          <ViewTools />
          <WorkflowTabs />
          <div className="mb-2 mt-1 flex min-h-0 flex-1 pl-[5px]">
            <Sidebar />
            <Workspace />
            <ScrollBar />
          </div>
        </div>
      </div>
      <div className="flex h-3 shrink-0 items-stretch justify-end border-t border-[#dcdcdc] bg-[#f0f0f1] text-black">
        <span className="mr-auto ml-[55%] border-l border-[#c9c9c9]" />
        {["P0630", "JOHNSON.CHANG.0001", "October 15, 2019", "13:46 PDT"].map((t) => <span key={t} className="border-l border-[#c9c9c9] px-[2px] leading-[11px]">{t}</span>)}
      </div>
      <TaskBar />
    </div>
  );
}
